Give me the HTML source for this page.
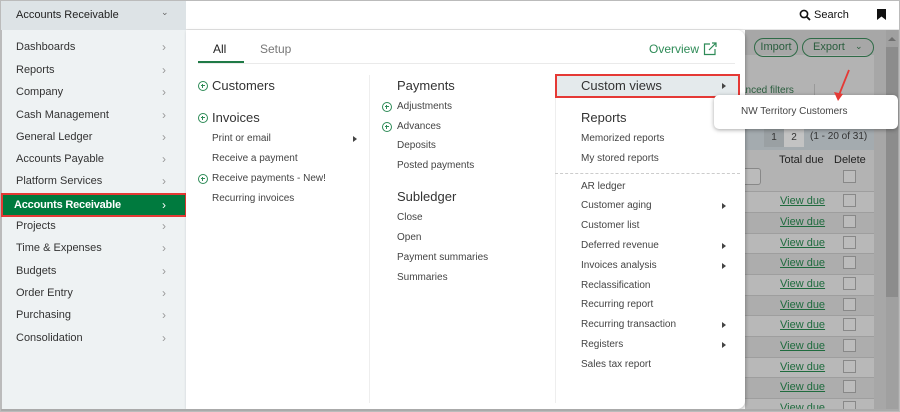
<!DOCTYPE html>
<html><head><meta charset="utf-8"><style>
*{margin:0;padding:0;box-sizing:border-box}
html,body{width:900px;height:412px;overflow:hidden}
body{background:#fff;font-family:"Liberation Sans",sans-serif;position:relative;color:#333}
.a{position:absolute;white-space:nowrap}
.sb{font-size:11px;line-height:14px;color:#333}
.chev{position:absolute;left:162px;font-size:12px;line-height:14px;color:#999}
.h{font-size:13px;line-height:16px;color:#333}
.l{font-size:10px;line-height:14px;color:#444}
.p{position:absolute;width:10px;height:10px;border:1.2px solid #2e8b57;border-radius:50%}
.p:before{content:"";position:absolute;left:1.7px;top:3.2px;width:4.2px;height:1.2px;background:#2e8b57}
.p:after{content:"";position:absolute;left:3.2px;top:1.7px;width:1.2px;height:4.2px;background:#2e8b57}
.tri{position:absolute;width:0;height:0;border-left:4px solid #444;border-top:3px solid transparent;border-bottom:3px solid transparent}
.row{position:absolute;left:0;width:129px;height:21px;border-top:1px solid #9e9e9e}
.vd{position:absolute;left:35px;font-size:11px;color:#1f6b3e;text-decoration:underline;line-height:14px}
.cb{position:absolute;left:98px;width:13px;height:13px;border:1px solid #888;background:#bcbcbc}
</style></head><body>
<div class="a" style="left:0;top:0;width:900px;height:30px;background:#fff;border-bottom:1px solid #e5e5e5"></div>
<div class="a" style="left:0;top:0;width:186px;height:30px;background:#dde3e6"></div>
<div class="a" style="left:16px;top:8px;font-size:11px;line-height:14px;color:#222">Accounts Receivable</div>
<div class="a" style="left:161px;top:7px;font-size:9px;color:#666">&#8964;</div>
<svg class="a" style="left:799px;top:9px" width="12" height="12" viewBox="0 0 12 12"><circle cx="5" cy="5" r="3.6" fill="none" stroke="#111" stroke-width="1.6"/><line x1="7.6" y1="7.6" x2="11" y2="11" stroke="#111" stroke-width="1.8"/></svg>
<div class="a" style="left:814px;top:8px;font-size:11px;line-height:14px;color:#111">Search</div>
<svg class="a" style="left:877px;top:9px" width="9" height="11" viewBox="0 0 9 11"><path d="M0 0H9V11L4.5 7.5L0 11Z" fill="#111"/></svg>

<div class="a" style="left:745px;top:30px;width:155px;height:382px;background:#a7a7a7"></div>
<div class="a" style="left:745px;top:55px;width:129px;height:354px;background:#b3b3b3"></div>
<div class="a" style="left:745px;top:126px;width:129px;height:24px;background:#a4abaf"></div>
<div class="a" style="left:886px;top:30px;width:12px;height:379px;background:#a0a0a0"></div>
<div class="a" style="left:886px;top:47px;width:12px;height:250px;background:#8c8c8c"></div>
<div class="a" style="left:888px;top:37px;width:0;height:0;border-left:4px solid transparent;border-right:4px solid transparent;border-bottom:4px solid #6f6f6f"></div>
<div class="a" style="left:754px;top:38px;width:44px;height:19px;border:1.3px solid #2f6b47;border-radius:10px;font-size:11px;line-height:16px;color:#2a5d3e;text-align:center">Import</div>
<div class="a" style="left:802px;top:38px;width:72px;height:19px;border:1.3px solid #2f6b47;border-radius:10px;font-size:11px;line-height:16px;color:#2a5d3e;padding-left:10px">Export<span style="position:absolute;left:52px;top:-1px;font-size:9px">&#8964;</span></div>
<div class="a" style="left:740px;top:85px;font-size:10px;color:#2a5d3e">anced filters</div>
<div class="a" style="left:814px;top:84px;width:1px;height:14px;background:#999"></div>
<div class="a" style="left:764px;top:128px;width:20px;height:19px;background:#9aa0a3;font-size:10px;line-height:19px;text-align:center">1</div>
<div class="a" style="left:784px;top:128px;width:20px;height:19px;background:#c3c3c3;font-size:10px;line-height:19px;text-align:center">2</div>
<div class="a" style="left:810px;top:131px;font-size:10px;color:#333">(1 - 20 of 31)</div>
<div class="a" style="left:779px;top:154px;font-size:11px;color:#222">Total due</div>
<div class="a" style="left:834px;top:154px;font-size:11px;color:#222">Delete</div>
<div class="a" style="left:745px;top:168px;width:16px;height:17px;border:1px solid #888;border-left:none;border-radius:0 3px 3px 0;background:#bbb"></div>
<div class="cb" style="left:843px;top:170px"></div>
<div class="a" style="left:745px;top:191px;width:129px;height:218px;overflow:hidden">
<div class="row" style="top:0;background:#b8b8b8"></div><div class="vd" style="top:3px">View due</div><div class="cb" style="top:3px"></div>
<div class="row" style="top:21px;background:#adadad"></div><div class="vd" style="top:24px">View due</div><div class="cb" style="top:24px"></div>
<div class="row" style="top:42px;background:#b8b8b8"></div><div class="vd" style="top:45px">View due</div><div class="cb" style="top:45px"></div>
<div class="row" style="top:62px;background:#adadad"></div><div class="vd" style="top:65px">View due</div><div class="cb" style="top:65px"></div>
<div class="row" style="top:83px;background:#b8b8b8"></div><div class="vd" style="top:86px">View due</div><div class="cb" style="top:86px"></div>
<div class="row" style="top:104px;background:#adadad"></div><div class="vd" style="top:107px">View due</div><div class="cb" style="top:107px"></div>
<div class="row" style="top:124px;background:#b8b8b8"></div><div class="vd" style="top:127px">View due</div><div class="cb" style="top:127px"></div>
<div class="row" style="top:145px;background:#adadad"></div><div class="vd" style="top:148px">View due</div><div class="cb" style="top:148px"></div>
<div class="row" style="top:166px;background:#b8b8b8"></div><div class="vd" style="top:169px">View due</div><div class="cb" style="top:169px"></div>
<div class="row" style="top:186px;background:#adadad"></div><div class="vd" style="top:189px">View due</div><div class="cb" style="top:189px"></div>
<div class="row" style="top:207px;background:#b8b8b8"></div><div class="vd" style="top:210px">View due</div><div class="cb" style="top:210px"></div>
</div>

<div class="a" style="left:0;top:30px;width:186px;height:379px;background:#eef2f3;border-left:2px solid #bbb"></div>
<div class="a sb" style="left:16px;top:40px">Dashboards</div><div class="chev" style="top:40px">&#8250;</div>
<div class="a sb" style="left:16px;top:63px">Reports</div><div class="chev" style="top:63px">&#8250;</div>
<div class="a sb" style="left:16px;top:85px">Company</div><div class="chev" style="top:85px">&#8250;</div>
<div class="a sb" style="left:16px;top:108px">Cash Management</div><div class="chev" style="top:108px">&#8250;</div>
<div class="a sb" style="left:16px;top:130px">General Ledger</div><div class="chev" style="top:130px">&#8250;</div>
<div class="a sb" style="left:16px;top:152px">Accounts Payable</div><div class="chev" style="top:152px">&#8250;</div>
<div class="a sb" style="left:16px;top:174px">Platform Services</div><div class="chev" style="top:174px">&#8250;</div>
<div class="a" style="left:1px;top:193px;width:186px;height:24px;background:#007a3e;border:2px solid #e53935"></div>
<div class="a" style="left:14px;top:198px;font-size:11px;line-height:14px;color:#fff;font-weight:bold;letter-spacing:-0.2px">Accounts Receivable</div><div class="chev" style="top:198px;color:#fff">&#8250;</div>
<div class="a sb" style="left:16px;top:219px">Projects</div><div class="chev" style="top:219px">&#8250;</div>
<div class="a sb" style="left:16px;top:241px">Time &amp; Expenses</div><div class="chev" style="top:241px">&#8250;</div>
<div class="a sb" style="left:16px;top:264px">Budgets</div><div class="chev" style="top:264px">&#8250;</div>
<div class="a sb" style="left:16px;top:286px">Order Entry</div><div class="chev" style="top:286px">&#8250;</div>
<div class="a sb" style="left:16px;top:308px">Purchasing</div><div class="chev" style="top:308px">&#8250;</div>
<div class="a sb" style="left:16px;top:331px">Consolidation</div><div class="chev" style="top:331px">&#8250;</div>

<div class="a" style="left:186px;top:30px;width:559px;height:379px;background:#fff;border-radius:0 8px 8px 0;box-shadow:1px 1px 3px rgba(0,0,0,.25)"></div>
<div class="a" style="left:198px;top:63px;width:537px;height:1px;background:#eaeaea"></div>
<div class="a" style="left:213px;top:42px;font-size:12px;line-height:14px;color:#222">All</div>
<div class="a" style="left:198px;top:61px;width:46px;height:2px;background:#1f7a46"></div>
<div class="a" style="left:260px;top:42px;font-size:12px;line-height:14px;color:#777">Setup</div>
<div class="a" style="left:649px;top:42px;font-size:12px;line-height:14px;color:#2e8b57">Overview</div>
<svg class="a" style="left:703px;top:42px" width="14" height="14" viewBox="0 0 14 14"><path d="M7 2H1.5V12.5H12V7" fill="none" stroke="#2e8b57" stroke-width="1.2"/><path d="M6 8L13 1M9 1H13V5" fill="none" stroke="#2e8b57" stroke-width="1.2"/></svg>
<div class="a" style="left:369px;top:75px;width:1px;height:328px;background:#eee"></div>
<div class="a" style="left:555px;top:75px;width:1px;height:328px;background:#eee"></div>

<div class="p" style="left:198px;top:81px"></div><div class="a h" style="left:212px;top:78px">Customers</div>
<div class="p" style="left:198px;top:113px"></div><div class="a h" style="left:212px;top:110px">Invoices</div>
<div class="a l" style="left:212px;top:132px">Print or email</div><div class="tri" style="left:353px;top:136px"></div>
<div class="a l" style="left:212px;top:152px">Receive a payment</div>
<div class="p" style="left:198px;top:174px"></div><div class="a l" style="left:212px;top:172px">Receive payments - New!</div>
<div class="a l" style="left:212px;top:192px">Recurring invoices</div>

<div class="a h" style="left:397px;top:78px">Payments</div>
<div class="p" style="left:382px;top:102px"></div><div class="a l" style="left:397px;top:100px">Adjustments</div>
<div class="p" style="left:382px;top:122px"></div><div class="a l" style="left:397px;top:120px">Advances</div>
<div class="a l" style="left:397px;top:139px">Deposits</div>
<div class="a l" style="left:397px;top:159px">Posted payments</div>
<div class="a h" style="left:397px;top:189px">Subledger</div>
<div class="a l" style="left:397px;top:211px">Close</div>
<div class="a l" style="left:397px;top:231px">Open</div>
<div class="a l" style="left:397px;top:251px">Payment summaries</div>
<div class="a l" style="left:397px;top:271px">Summaries</div>

<div class="a" style="left:555px;top:74px;width:185px;height:24px;background:#e4eaec;border:2px solid #e53935"></div>
<div class="a h" style="left:581px;top:78px">Custom views</div><div class="tri" style="left:722px;top:83px"></div>
<div class="a h" style="left:581px;top:110px">Reports</div>
<div class="a l" style="left:581px;top:132px">Memorized reports</div>
<div class="a l" style="left:581px;top:152px">My stored reports</div>
<div class="a" style="left:555px;top:173px;width:185px;border-top:1px dashed #ccc"></div>
<div class="a l" style="left:581px;top:180px">AR ledger</div>
<div class="a l" style="left:581px;top:199px">Customer aging</div><div class="tri" style="left:722px;top:203px"></div>
<div class="a l" style="left:581px;top:219px">Customer list</div>
<div class="a l" style="left:581px;top:239px">Deferred revenue</div><div class="tri" style="left:722px;top:243px"></div>
<div class="a l" style="left:581px;top:259px">Invoices analysis</div><div class="tri" style="left:722px;top:263px"></div>
<div class="a l" style="left:581px;top:279px">Reclassification</div>
<div class="a l" style="left:581px;top:298px">Recurring report</div>
<div class="a l" style="left:581px;top:318px">Recurring transaction</div><div class="tri" style="left:722px;top:322px"></div>
<div class="a l" style="left:581px;top:338px">Registers</div><div class="tri" style="left:722px;top:342px"></div>
<div class="a l" style="left:581px;top:358px">Sales tax report</div>

<div class="a" style="left:714px;top:95px;width:184px;height:34px;background:#fff;border-radius:5px;box-shadow:0 1px 4px rgba(0,0,0,.35)"></div>
<div class="a" style="left:741px;top:105px;font-size:10px;line-height:14px;color:#444">NW Territory Customers</div>
<svg class="a" style="left:830px;top:68px" width="22" height="36" viewBox="0 0 22 36"><line x1="19" y1="2" x2="9" y2="27" stroke="#e53935" stroke-width="1.8"/><path d="M4 24L8 33L13 26Z" fill="#e53935"/></svg>

<div class="a" style="left:0;top:409px;width:900px;height:3px;background:#aaa"></div>
<div class="a" style="left:0;top:0;width:900px;height:412px;border:1px solid #bbb"></div>
</body></html>
